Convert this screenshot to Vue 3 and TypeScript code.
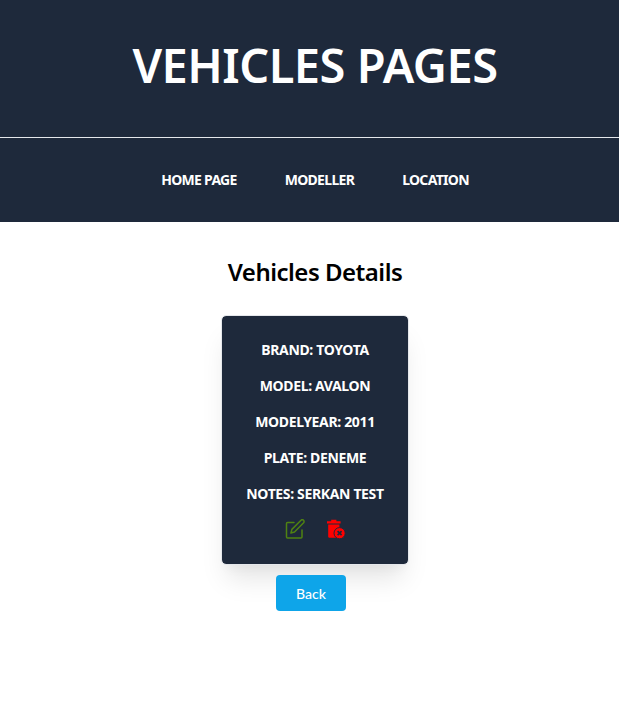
<script setup lang="ts">
const navItems: string[] = ['HOME PAGE', 'MODELLER', 'LOCATION']
const fields: string[] = ['BRAND: TOYOTA', 'MODEL: AVALON', 'MODELYEAR: 2011', 'PLATE: DENEME', 'NOTES: SERKAN TEST']
</script>

<template>
  <div class="page">
    <header class="header">
      <div class="title-wrap"><h1 class="title">VEHICLES PAGES</h1></div>
      <nav class="nav">
        <a v-for="item in navItems" :key="item" class="nav-link">{{ item }}</a>
      </nav>
    </header>
    <main class="main">
      <h2 class="heading">Vehicles Details</h2>
      <section class="card">
        <p v-for="f in fields" :key="f" class="field">{{ f }}</p>
        <div class="actions">
          <svg class="icon" width="20" height="20" viewBox="0 0 20 20" fill="none" stroke="#4f8212" stroke-width="1.5" stroke-linecap="round" stroke-linejoin="round">
            <path d="M9 3.5H2.5a1 1 0 0 0-1 1V18a1 1 0 0 0 1 1H16a1 1 0 0 0 1-1v-7" />
            <path d="M16 1.3a1.6 1.6 0 0 1 2.6 2.4L9.5 13l-3.6 1 1-3.6z" />
          </svg>
          <svg class="icon" width="20" height="20" viewBox="0 0 20 20">
            <path fill="#ff0000" d="M5.2 2.2V0.8h5.2v1.4h4.2v2.2H1V2.2zM2.2 5.4h11.2v12.3a1.2 1.2 0 0 1-1.2 1.1H3.4a1.2 1.2 0 0 1-1.2-1.1z" />
            <circle cx="13.6" cy="14.2" r="5.6" fill="#ff0000" stroke="#1e293b" stroke-width="1" />
            <path d="M11.6 12.2l4 4M15.6 12.2l-4 4" stroke="#1e293b" stroke-width="1.7" />
          </svg>
        </div>
      </section>
      <button class="back" type="button">Back</button>
    </main>
  </div>
</template>

<style scoped>
.page {
  font-family: "Noto Sans", sans-serif;
  background: #fff;
  min-height: 716px;
}
.header {
  background: #1e293b;
  color: #fff;
}
.title-wrap {
  border-bottom: 1px solid #e5e7eb;
  display: flex;
  justify-content: center;
  padding: 30px 0 0 11px;
  height: 107px;
}
.title {
  margin: 0;
  font-size: 47px;
  line-height: 70px;
  font-weight: 600;
  letter-spacing: -0.5px;
}
.nav {
  height: 84px;
  display: flex;
  justify-content: center;
  align-items: center;
  gap: 48px;
  padding-left: 11px;
}
.nav-link {
  font-size: 14px;
  font-weight: 700;
  line-height: 20px;
  letter-spacing: -0.7px;
}
.main {
  display: flex;
  flex-direction: column;
  align-items: center;
  padding-left: 11px;
}
.heading {
  margin: 34px 0 28px;
  font-size: 24px;
  line-height: 32px;
  font-weight: 600;
  letter-spacing: -0.5px;
  color: #000;
}
.card {
  width: 186px;
  height: 248px;
  box-sizing: border-box;
  background: #1e293b;
  border-radius: 4px;
  padding-top: 16px;
  box-shadow: 0 20px 25px -5px rgba(0, 0, 0, 0.1), 0 10px 10px -5px rgba(0, 0, 0, 0.04);
  outline: 1px solid #e5e7eb;
  display: flex;
  flex-direction: column;
  align-items: center;
}
.field {
  margin: 0;
  height: 36px;
  line-height: 36px;
  font-size: 14px;
  font-weight: 700;
  letter-spacing: -0.35px;
  color: #fff;
  white-space: nowrap;
}
.actions {
  display: flex;
  gap: 21px;
  margin-top: 7px;
}
.back {
  margin: 11px 8px 0 0;
  width: 70px;
  height: 36px;
  border: 0;
  border-radius: 4px;
  background: #0ea5e9;
  color: #fff;
  font-family: Lato, sans-serif;
  font-size: 14px;
  font-weight: 500;
}
</style>
